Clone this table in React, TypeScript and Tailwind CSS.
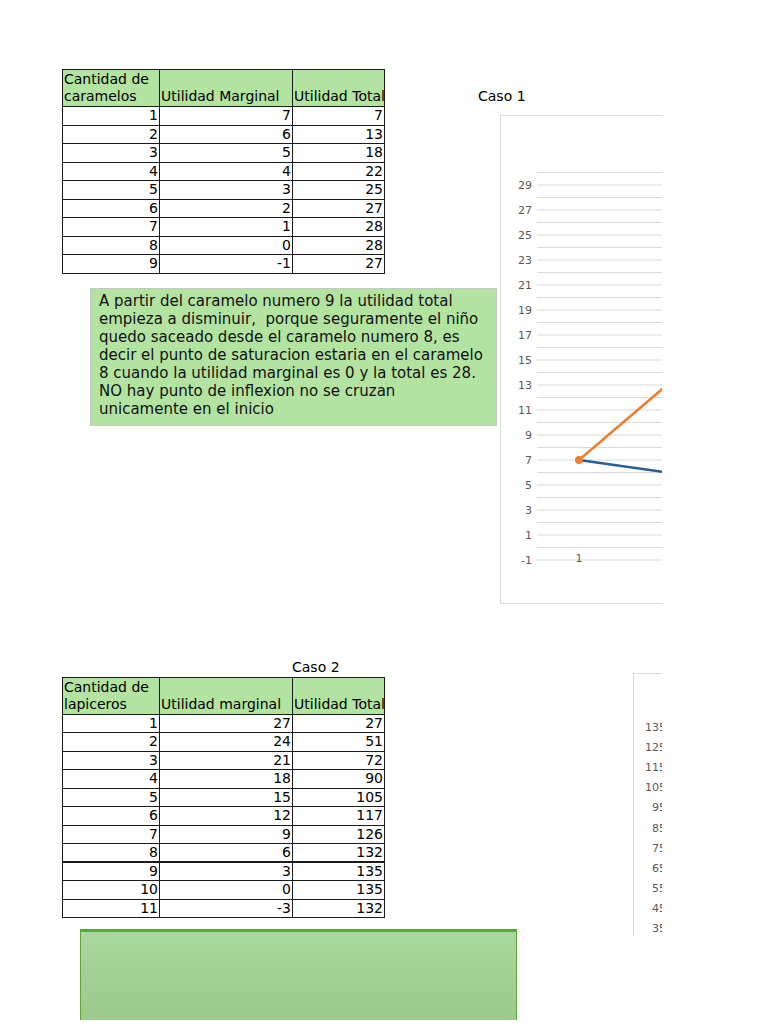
import React from "react";

type Row = [string, string, string];

function DataTable({ head, rows, doubleAfter }: { head: [string, string, string]; rows: Row[]; doubleAfter?: number }) {
  return (
    <table className="table-fixed border-collapse w-[322px] text-[14px] leading-[17px] text-black">
      <colgroup>
        <col className="w-[97px]" />
        <col className="w-[133px]" />
        <col className="w-[92px]" />
      </colgroup>
      <thead>
        <tr className="h-[37px]">
          {head.map((h, i) => (
            <th
              key={i}
              className="border border-[#1a1a1a] bg-[#b3e3a1] align-bottom text-left font-normal pl-[1px] pr-0 pb-[1px] whitespace-pre overflow-visible"
            >
              {h}
            </th>
          ))}
        </tr>
      </thead>
      <tbody>
        {rows.map((r, ri) => (
          <tr key={ri} className="h-[18.5px]">
            {r.map((c, ci) => (
              <td
                key={ci}
                className={
                  "border border-[#1a1a1a] text-right pr-[1px] py-0 " +
                  (doubleAfter === ri ? "border-b-2" : "")
                }
              >
                {c}
              </td>
            ))}
          </tr>
        ))}
      </tbody>
    </table>
  );
}

function Chart1() {
  const y = (v: number) => 444 - (v + 1) * 12.5;
  const grid: number[] = [];
  for (let v = -1; v <= 30; v++) grid.push(v);
  const labels: number[] = [];
  for (let v = -1; v <= 29; v += 2) labels.push(v);
  const x1 = 78;
  const x2 = 166;
  return (
    <svg width="200" height="488" className="block">
      {grid.map((v) => (
        <line key={v} x1="36" x2="200" y1={y(v)} y2={y(v)} stroke="#d9d9d9" strokeWidth="1" />
      ))}
      {labels.map((v) => (
        <text key={v} x="31" y={y(v) + 4} textAnchor="end" fontSize="11" fill="#595959" fontFamily="DejaVu Sans, sans-serif">
          {v}
        </text>
      ))}
      <text x={x1} y={y(-1) + 2} textAnchor="middle" fontSize="11" fill="#595959" fontFamily="DejaVu Sans, sans-serif">
        1
      </text>
      <line x1={x1} y1={y(7)} x2={x2} y2={y(6)} stroke="#255e91" strokeWidth="2.5" strokeLinecap="round" />
      <line x1={x1} y1={y(7)} x2={x2} y2={y(13)} stroke="#ed7d31" strokeWidth="2.5" strokeLinecap="round" />
      <circle cx={x1} cy={y(7)} r="4" fill="#ed7d31" />
    </svg>
  );
}

function Chart2() {
  const vals = [135, 125, 115, 105, 95, 85, 75, 65, 55, 45, 35];
  return (
    <svg width="100" height="270" className="block">
      {vals.map((v, i) => (
        <text key={v} x="32" y={53 + i * 20.1 + 4} textAnchor="end" fontSize="11" fill="#595959" fontFamily="DejaVu Sans, sans-serif">
          {v}
        </text>
      ))}
    </svg>
  );
}

export default function App() {
  const t1: Row[] = [
    ["1", "7", "7"],
    ["2", "6", "13"],
    ["3", "5", "18"],
    ["4", "4", "22"],
    ["5", "3", "25"],
    ["6", "2", "27"],
    ["7", "1", "28"],
    ["8", "0", "28"],
    ["9", "-1", "27"],
  ];
  const t2: Row[] = [
    ["1", "27", "27"],
    ["2", "24", "51"],
    ["3", "21", "72"],
    ["4", "18", "90"],
    ["5", "15", "105"],
    ["6", "12", "117"],
    ["7", "9", "126"],
    ["8", "6", "132"],
    ["9", "3", "135"],
    ["10", "0", "135"],
    ["11", "-3", "132"],
  ];
  return (
    <div className="w-[768px] h-[1024px] bg-white overflow-hidden font-['DejaVu_Sans',sans-serif] text-black">
      <div className="relative w-[662px] h-[936px] overflow-hidden pt-[69px] pl-[62px]">
        <DataTable head={["Cantidad de\ncaramelos", "Utilidad Marginal", "Utilidad Total"]} rows={t1} />
        <div className="mt-[14px] ml-[28px] w-[407px] h-[138px] bg-[#b3e3a1] border border-[#c6c6c6] pt-[3px] pl-[8px] pr-[10px] text-[15px] leading-[18px] text-[#111]">
          A partir del caramelo numero 9 la utilidad total empieza a disminuir,&nbsp; porque seguramente el niño quedo saceado desde el caramelo numero 8, es decir el punto de saturacion estaria en el caramelo 8 cuando la utilidad marginal es 0 y la total es 28. NO hay punto de inflexion no se cruzan unicamente en el inicio
        </div>
        <div className="mt-[234px] h-[17px] leading-[14px] text-[14px] pl-[230px]">Caso 2</div>
        <DataTable head={["Cantidad de\nlapiceros", "Utilidad marginal", "Utilidad Total"]} rows={t2} doubleAfter={7} />

        <div className="absolute left-[478px] top-[88px] text-[14px] leading-[16px]">Caso 1</div>
        <div className="absolute left-[500px] top-[115px] w-[200px] h-[489px] border border-[#d9d9d9] bg-white">
          <Chart1 />
        </div>
        <div className="absolute left-[633px] top-[673px] w-[100px] h-[300px] border border-[#d9d9d9] bg-white">
          <Chart2 />
        </div>
      </div>
      <div className="-mt-[7px] ml-[80px] w-[437px] h-[91px] border-t-[3px] border-x border-[#5aa83b] bg-linear-to-b from-[#aad79d] to-[#9bca8b]" />
    </div>
  );
}
